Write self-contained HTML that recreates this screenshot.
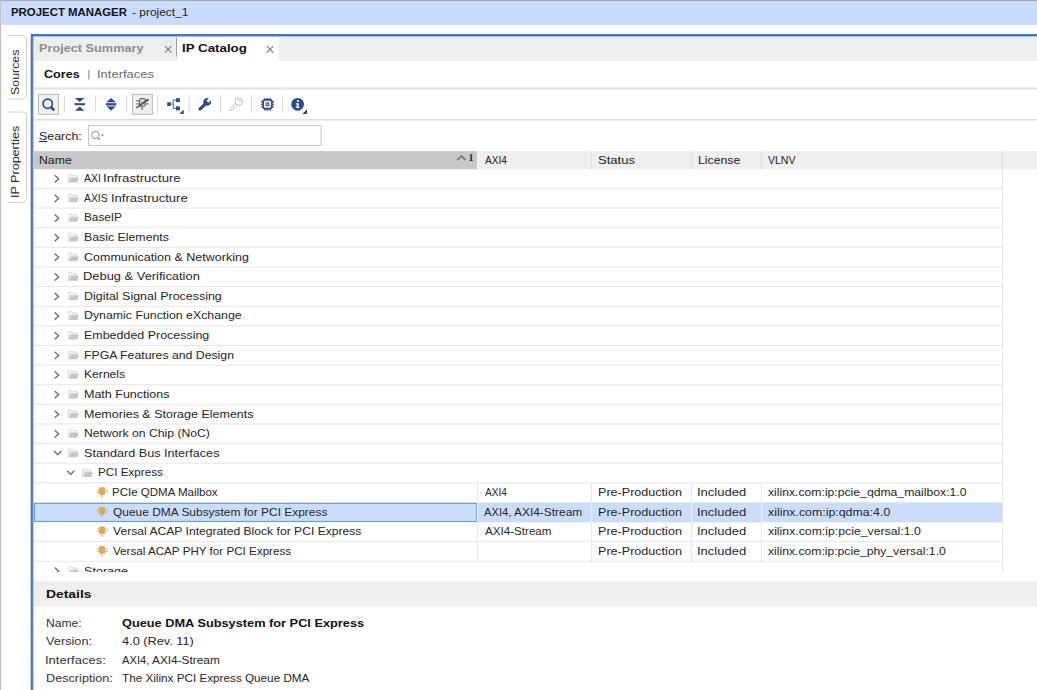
<!DOCTYPE html>
<html><head><meta charset="utf-8"><title>IP Catalog</title>
<style>
html,body{margin:0;padding:0;background:#fff;}
body{width:1037px;height:690px;position:relative;overflow:hidden;font-family:"Liberation Sans",sans-serif;font-size:11.5px;color:#1e1e1e;}
.a{position:absolute;}
.t{position:absolute;z-index:6;white-space:pre;line-height:14px;height:14px;transform-origin:0 0;}
.b{font-weight:bold;}
.sep{position:absolute;left:34px;width:968.5px;height:1px;background:#e7e7e7;}
.vs{position:absolute;top:95px;width:1px;height:18px;background:#dadada;}
svg.L{position:absolute;left:0;top:0;}
</style></head><body>
<svg class="L" style="z-index:0" width="1037" height="690" viewBox="0 0 1037 690"><rect x="0.00" y="0.00" width="1037.00" height="1.00" fill="#a8a8a8"/>
<rect x="0.00" y="0.00" width="1.20" height="690.00" fill="#c4c4c4"/>
<rect x="1.00" y="1.00" width="1036.00" height="23.90" fill="#c9dcfd"/>
<path d="M7,35.5 H23 Q26.5,35.5 26.5,39 V95.5 Q26.5,99 23,99 H7" fill="none" stroke="#d0d0d0" stroke-width="1"/>
<path d="M7,112 H23 Q26.5,112 26.5,115.5 V198.8 Q26.5,202.3 23,202.3 H7" fill="none" stroke="#d0d0d0" stroke-width="1"/>
<rect x="30.70" y="34.00" width="1007.00" height="656.00" fill="#4175cc"/>
<rect x="32.70" y="36.00" width="1005.00" height="654.00" fill="#86a8e2"/>
<rect x="33.60" y="36.70" width="1004.00" height="654.00" fill="#ffffff"/>
<rect x="34.00" y="37.00" width="1003.00" height="23.90" fill="#eeeeee"/>
<rect x="177.00" y="37.00" width="102.00" height="24.00" fill="#ffffff"/>
<rect x="176.00" y="37.00" width="1.00" height="19.50" fill="#a0a0a0"/>
<g transform="translate(164.60,45.80)"><path d="M0.4,0.4 L6.8,6.8 M6.8,0.4 L0.4,6.8" stroke="#777" stroke-width="1.05" fill="none"/></g>
<g transform="translate(266.50,45.80)"><path d="M0.4,0.4 L6.8,6.8 M6.8,0.4 L0.4,6.8" stroke="#777" stroke-width="1.05" fill="none"/></g>
<rect x="88.40" y="69.90" width="1.00" height="9.60" fill="#7c7c7c"/>
<rect x="34.00" y="87.30" width="1003.00" height="2.40" fill="#e4e4e4"/>
<rect x="34.00" y="119.00" width="1003.00" height="1.60" fill="#dedede"/>
<rect x="38.5" y="94.4" width="19.9" height="19.9" fill="#f1f1f1" stroke="#bababa" stroke-width="1"/>
<rect x="132.5" y="94.4" width="19.9" height="19.9" fill="#efefef" stroke="#bababa" stroke-width="1"/>
<rect x="63.90" y="95.30" width="1.00" height="17.40" fill="#dadada"/>
<rect x="94.90" y="95.30" width="1.00" height="17.40" fill="#dadada"/>
<rect x="126.10" y="95.30" width="1.00" height="17.40" fill="#dadada"/>
<rect x="157.10" y="95.30" width="1.00" height="17.40" fill="#dadada"/>
<rect x="188.70" y="95.30" width="1.00" height="17.40" fill="#dadada"/>
<rect x="220.00" y="95.30" width="1.00" height="17.40" fill="#dadada"/>
<rect x="250.90" y="95.30" width="1.00" height="17.40" fill="#dadada"/>
<rect x="282.20" y="95.30" width="1.00" height="17.40" fill="#dadada"/>
<g transform="translate(40.00,96.00)"><circle cx="7.7" cy="7.7" r="4.6" fill="none" stroke="#2b4c8c" stroke-width="1.7"/><line x1="11.5" y1="11.5" x2="13.4" y2="13.4" stroke="#2b4c8c" stroke-width="2.8" stroke-linecap="round"/></g>
<g transform="translate(74.00,97.30)"><g fill="#2b4c8c"><polygon points="0.8,0.7 10.6,0.7 5.7,4.7"/><rect x="0.5" y="5.9" width="10.5" height="2.0"/><polygon points="1.0,13.5 10.4,13.5 5.7,9.3"/></g></g>
<g transform="translate(105.00,97.30)"><rect x="1.4" y="4.6" width="9.6" height="4.7" fill="#c3cde3"/><g fill="#2b4c8c"><polygon points="6.1,0.6 10.6,4.7 1.6,4.7"/><rect x="1.0" y="5.9" width="10.2" height="2.1"/><polygon points="1.6,9.2 10.6,9.2 6.1,13.5"/></g></g>
<g transform="translate(135.00,97.00)"><g stroke="#6a6a6a" stroke-width="1.0" fill="none"><line x1="1" y1="3.9" x2="13.7" y2="3.9"/><line x1="1" y1="6.9" x2="13.7" y2="6.9"/><line x1="7.1" y1="9.5" x2="7.1" y2="12.9" stroke-width="1.2"/></g><rect x="4.6" y="1.6" width="5.6" height="7.6" rx="0.8" fill="#cfcfcf" stroke="#4a4a4a" stroke-width="0.9"/><line x1="1.3" y1="11.0" x2="13.4" y2="2.1" stroke="#444" stroke-width="1.5"/></g>
<g transform="translate(166.00,97.30)"><g fill="#2b4c8c"><rect x="1.2" y="4.9" width="3.6" height="3.8"/><rect x="9.9" y="0.9" width="4" height="3.9"/><rect x="9.9" y="9.1" width="4" height="4"/></g><path d="M4.8,6.8 H7.3 M9.9,2.8 H7.3 V11.1 H9.9" fill="none" stroke="#5d7dbb" stroke-width="1.1"/><polygon points="17.7,12.4 17.7,16.4 13.3,16.4" fill="#3a3a3a"/></g>
<g transform="translate(197.30,96.80)"><g transform="scale(0.94)"><path d="M14.3,3.9 L11.9,6.3 L9.7,4.1 L12.1,1.7 C10.6,1.1 8.8,1.4 7.6,2.6 C6.4,3.8 6.1,5.5 6.6,7.0 L1.7,11.9 C1.0,12.6 1.0,13.6 1.7,14.3 C2.4,15.0 3.4,15.0 4.1,14.3 L9.0,9.4 C10.5,9.9 12.2,9.6 13.4,8.4 C14.6,7.2 14.9,5.4 14.3,3.9 Z" fill="#2b4c8c"/></g></g>
<g transform="translate(229.00,97.00)"><line x1="2.2" y1="12.4" x2="8" y2="6.6" stroke="#c2c2c2" stroke-width="3.4" stroke-linecap="round"/><line x1="2.2" y1="12.4" x2="8" y2="6.6" stroke="#fff" stroke-width="1.5" stroke-linecap="round"/><circle cx="9.9" cy="4.7" r="3.7" fill="#fff" stroke="#c2c2c2" stroke-width="1"/><circle cx="10.9" cy="3.7" r="0.9" fill="none" stroke="#c8c8c8" stroke-width="0.8"/></g>
<g transform="translate(260.90,97.70)"><g transform="scale(0.88)"><g stroke="#2b4c8c" stroke-width="1.5"><path d="M4.6,0.3 V14.7 M7.5,0.3 V14.7 M10.4,0.3 V14.7 M0.3,4.6 H14.7 M0.3,7.5 H14.7 M0.3,10.4 H14.7" fill="none"/></g><rect x="2.6" y="2.6" width="9.8" height="9.8" rx="1.8" fill="#fff" stroke="#2b4c8c" stroke-width="2"/><rect x="6" y="6" width="3" height="3" fill="#dfe6f3" stroke="#2b4c8c" stroke-width="1.2"/></g></g>
<g transform="translate(291.00,97.70)"><circle cx="6.6" cy="6.6" r="6.4" fill="#2b4c8c"/><g fill="#fff"><circle cx="6.9" cy="3.4" r="1.1"/><path d="M5.0,5.5 H7.7 V9.4 H8.6 V10.4 H4.8 V9.4 H5.7 V6.5 H5.0 Z"/></g><polygon points="16,11.6 16,16.2 11.4,16.2" fill="#3a3a3a"/></g>
<rect x="88.5" y="125.6" width="232.6" height="19.8" fill="#fff" stroke="#c6c6c6" stroke-width="1"/>
<g transform="translate(90.00,130.00)"><circle cx="5.4" cy="5.0" r="3.6" fill="none" stroke="#a2a2a2" stroke-width="1.1"/><line x1="8" y1="7.7" x2="10.2" y2="9.7" stroke="#9a9a9a" stroke-width="1.4"/><polygon points="10.9,4.6 14.1,4.6 12.5,6.5" fill="#8c8c8c"/></g>
<rect x="34.00" y="151.10" width="443.30" height="18.20" fill="#c8c8c8"/>
<rect x="477.30" y="151.10" width="559.70" height="18.20" fill="#efefef"/>
<rect x="477.20" y="151.10" width="0.90" height="18.20" fill="#f7f7f7"/>
<rect x="590.90" y="151.00" width="1.00" height="18.20" fill="#e0e0e0"/>
<rect x="691.00" y="151.00" width="1.00" height="18.20" fill="#e0e0e0"/>
<rect x="760.80" y="151.00" width="1.00" height="18.20" fill="#e0e0e0"/>
<g transform="translate(456.50,154.00)"><polyline points="0.8,6.0 4.9,2.0 9.0,6.0" fill="none" stroke="#808080" stroke-width="1.9"/></g>
<rect x="34.00" y="187.96" width="968.50" height="1.00" fill="#e6e6e6"/>
<rect x="34.00" y="207.58" width="968.50" height="1.00" fill="#e6e6e6"/>
<rect x="34.00" y="227.21" width="968.50" height="1.00" fill="#e6e6e6"/>
<rect x="34.00" y="246.83" width="968.50" height="1.00" fill="#e6e6e6"/>
<rect x="34.00" y="266.45" width="968.50" height="1.00" fill="#e6e6e6"/>
<rect x="34.00" y="286.08" width="968.50" height="1.00" fill="#e6e6e6"/>
<rect x="34.00" y="305.70" width="968.50" height="1.00" fill="#e6e6e6"/>
<rect x="34.00" y="325.32" width="968.50" height="1.00" fill="#e6e6e6"/>
<rect x="34.00" y="344.94" width="968.50" height="1.00" fill="#e6e6e6"/>
<rect x="34.00" y="364.57" width="968.50" height="1.00" fill="#e6e6e6"/>
<rect x="34.00" y="384.19" width="968.50" height="1.00" fill="#e6e6e6"/>
<rect x="34.00" y="403.81" width="968.50" height="1.00" fill="#e6e6e6"/>
<rect x="34.00" y="423.44" width="968.50" height="1.00" fill="#e6e6e6"/>
<rect x="34.00" y="443.06" width="968.50" height="1.00" fill="#e6e6e6"/>
<rect x="34.00" y="462.68" width="968.50" height="1.00" fill="#e6e6e6"/>
<rect x="34.00" y="482.31" width="968.50" height="1.00" fill="#e6e6e6"/>
<rect x="34.00" y="501.93" width="968.50" height="1.00" fill="#e6e6e6"/>
<rect x="34.00" y="521.55" width="968.50" height="1.00" fill="#e6e6e6"/>
<rect x="34.00" y="541.17" width="968.50" height="1.00" fill="#e6e6e6"/>
<rect x="34.00" y="560.80" width="968.50" height="1.00" fill="#e6e6e6"/>
<rect x="34.00" y="503.05" width="968.10" height="18.95" fill="#cadefc"/>
<rect x="34.5" y="503.4" width="441.9" height="18.0" fill="none" stroke="#5a9dd8" stroke-width="1"/>
<rect x="476.80" y="483.10" width="1.00" height="78.40" fill="#e6e6e6"/>
<rect x="590.90" y="483.10" width="1.00" height="78.40" fill="#e6e6e6"/>
<rect x="691.00" y="483.10" width="1.00" height="78.40" fill="#e6e6e6"/>
<rect x="760.80" y="483.10" width="1.00" height="78.40" fill="#e6e6e6"/>
<rect x="477.20" y="503.05" width="0.90" height="18.95" fill="#eef3fb"/>
<rect x="591.30" y="503.05" width="0.90" height="18.95" fill="#eef3fb"/>
<rect x="691.40" y="503.05" width="0.90" height="18.95" fill="#eef3fb"/>
<rect x="761.20" y="503.05" width="0.90" height="18.95" fill="#eef3fb"/>
<rect x="1002.10" y="151.10" width="0.90" height="18.20" fill="#d9d9d9"/>
<rect x="1002.10" y="169.30" width="0.90" height="402.70" fill="#e5e5e5"/>
<g transform="translate(54.00,173.80)"><polyline points="0.7,1.4 4.6,5 0.7,8.6" fill="none" stroke="#6a6a6a" stroke-width="1.35"/></g>
<g transform="translate(68.00,174.00)"><path d="M0.4,8.3 V1.0 Q0.4,0.4 1.0,0.4 H3.8 L4.8,1.5 H8.6 Q9.2,1.5 9.2,2.1 V3.6 H2.6 L0.9,8.3 Z" fill="#f3f3f3" stroke="#d6d6d6" stroke-width="0.85"/><path d="M2.9,3.9 H10.7 L9.3,8.6 H1.2 Z" fill="#c6c6c6"/></g>
<g transform="translate(54.00,193.42)"><polyline points="0.7,1.4 4.6,5 0.7,8.6" fill="none" stroke="#6a6a6a" stroke-width="1.35"/></g>
<g transform="translate(68.00,193.62)"><path d="M0.4,8.3 V1.0 Q0.4,0.4 1.0,0.4 H3.8 L4.8,1.5 H8.6 Q9.2,1.5 9.2,2.1 V3.6 H2.6 L0.9,8.3 Z" fill="#f3f3f3" stroke="#d6d6d6" stroke-width="0.85"/><path d="M2.9,3.9 H10.7 L9.3,8.6 H1.2 Z" fill="#c6c6c6"/></g>
<g transform="translate(54.00,213.04)"><polyline points="0.7,1.4 4.6,5 0.7,8.6" fill="none" stroke="#6a6a6a" stroke-width="1.35"/></g>
<g transform="translate(68.00,213.24)"><path d="M0.4,8.3 V1.0 Q0.4,0.4 1.0,0.4 H3.8 L4.8,1.5 H8.6 Q9.2,1.5 9.2,2.1 V3.6 H2.6 L0.9,8.3 Z" fill="#f3f3f3" stroke="#d6d6d6" stroke-width="0.85"/><path d="M2.9,3.9 H10.7 L9.3,8.6 H1.2 Z" fill="#c6c6c6"/></g>
<g transform="translate(54.00,232.66)"><polyline points="0.7,1.4 4.6,5 0.7,8.6" fill="none" stroke="#6a6a6a" stroke-width="1.35"/></g>
<g transform="translate(68.00,232.86)"><path d="M0.4,8.3 V1.0 Q0.4,0.4 1.0,0.4 H3.8 L4.8,1.5 H8.6 Q9.2,1.5 9.2,2.1 V3.6 H2.6 L0.9,8.3 Z" fill="#f3f3f3" stroke="#d6d6d6" stroke-width="0.85"/><path d="M2.9,3.9 H10.7 L9.3,8.6 H1.2 Z" fill="#c6c6c6"/></g>
<g transform="translate(54.00,252.28)"><polyline points="0.7,1.4 4.6,5 0.7,8.6" fill="none" stroke="#6a6a6a" stroke-width="1.35"/></g>
<g transform="translate(68.00,252.48)"><path d="M0.4,8.3 V1.0 Q0.4,0.4 1.0,0.4 H3.8 L4.8,1.5 H8.6 Q9.2,1.5 9.2,2.1 V3.6 H2.6 L0.9,8.3 Z" fill="#f3f3f3" stroke="#d6d6d6" stroke-width="0.85"/><path d="M2.9,3.9 H10.7 L9.3,8.6 H1.2 Z" fill="#c6c6c6"/></g>
<g transform="translate(54.00,271.90)"><polyline points="0.7,1.4 4.6,5 0.7,8.6" fill="none" stroke="#6a6a6a" stroke-width="1.35"/></g>
<g transform="translate(68.00,272.10)"><path d="M0.4,8.3 V1.0 Q0.4,0.4 1.0,0.4 H3.8 L4.8,1.5 H8.6 Q9.2,1.5 9.2,2.1 V3.6 H2.6 L0.9,8.3 Z" fill="#f3f3f3" stroke="#d6d6d6" stroke-width="0.85"/><path d="M2.9,3.9 H10.7 L9.3,8.6 H1.2 Z" fill="#c6c6c6"/></g>
<g transform="translate(54.00,291.52)"><polyline points="0.7,1.4 4.6,5 0.7,8.6" fill="none" stroke="#6a6a6a" stroke-width="1.35"/></g>
<g transform="translate(68.00,291.72)"><path d="M0.4,8.3 V1.0 Q0.4,0.4 1.0,0.4 H3.8 L4.8,1.5 H8.6 Q9.2,1.5 9.2,2.1 V3.6 H2.6 L0.9,8.3 Z" fill="#f3f3f3" stroke="#d6d6d6" stroke-width="0.85"/><path d="M2.9,3.9 H10.7 L9.3,8.6 H1.2 Z" fill="#c6c6c6"/></g>
<g transform="translate(54.00,311.14)"><polyline points="0.7,1.4 4.6,5 0.7,8.6" fill="none" stroke="#6a6a6a" stroke-width="1.35"/></g>
<g transform="translate(68.00,311.34)"><path d="M0.4,8.3 V1.0 Q0.4,0.4 1.0,0.4 H3.8 L4.8,1.5 H8.6 Q9.2,1.5 9.2,2.1 V3.6 H2.6 L0.9,8.3 Z" fill="#f3f3f3" stroke="#d6d6d6" stroke-width="0.85"/><path d="M2.9,3.9 H10.7 L9.3,8.6 H1.2 Z" fill="#c6c6c6"/></g>
<g transform="translate(54.00,330.76)"><polyline points="0.7,1.4 4.6,5 0.7,8.6" fill="none" stroke="#6a6a6a" stroke-width="1.35"/></g>
<g transform="translate(68.00,330.96)"><path d="M0.4,8.3 V1.0 Q0.4,0.4 1.0,0.4 H3.8 L4.8,1.5 H8.6 Q9.2,1.5 9.2,2.1 V3.6 H2.6 L0.9,8.3 Z" fill="#f3f3f3" stroke="#d6d6d6" stroke-width="0.85"/><path d="M2.9,3.9 H10.7 L9.3,8.6 H1.2 Z" fill="#c6c6c6"/></g>
<g transform="translate(54.00,350.38)"><polyline points="0.7,1.4 4.6,5 0.7,8.6" fill="none" stroke="#6a6a6a" stroke-width="1.35"/></g>
<g transform="translate(68.00,350.58)"><path d="M0.4,8.3 V1.0 Q0.4,0.4 1.0,0.4 H3.8 L4.8,1.5 H8.6 Q9.2,1.5 9.2,2.1 V3.6 H2.6 L0.9,8.3 Z" fill="#f3f3f3" stroke="#d6d6d6" stroke-width="0.85"/><path d="M2.9,3.9 H10.7 L9.3,8.6 H1.2 Z" fill="#c6c6c6"/></g>
<g transform="translate(54.00,370.00)"><polyline points="0.7,1.4 4.6,5 0.7,8.6" fill="none" stroke="#6a6a6a" stroke-width="1.35"/></g>
<g transform="translate(68.00,370.20)"><path d="M0.4,8.3 V1.0 Q0.4,0.4 1.0,0.4 H3.8 L4.8,1.5 H8.6 Q9.2,1.5 9.2,2.1 V3.6 H2.6 L0.9,8.3 Z" fill="#f3f3f3" stroke="#d6d6d6" stroke-width="0.85"/><path d="M2.9,3.9 H10.7 L9.3,8.6 H1.2 Z" fill="#c6c6c6"/></g>
<g transform="translate(54.00,389.62)"><polyline points="0.7,1.4 4.6,5 0.7,8.6" fill="none" stroke="#6a6a6a" stroke-width="1.35"/></g>
<g transform="translate(68.00,389.82)"><path d="M0.4,8.3 V1.0 Q0.4,0.4 1.0,0.4 H3.8 L4.8,1.5 H8.6 Q9.2,1.5 9.2,2.1 V3.6 H2.6 L0.9,8.3 Z" fill="#f3f3f3" stroke="#d6d6d6" stroke-width="0.85"/><path d="M2.9,3.9 H10.7 L9.3,8.6 H1.2 Z" fill="#c6c6c6"/></g>
<g transform="translate(54.00,409.24)"><polyline points="0.7,1.4 4.6,5 0.7,8.6" fill="none" stroke="#6a6a6a" stroke-width="1.35"/></g>
<g transform="translate(68.00,409.44)"><path d="M0.4,8.3 V1.0 Q0.4,0.4 1.0,0.4 H3.8 L4.8,1.5 H8.6 Q9.2,1.5 9.2,2.1 V3.6 H2.6 L0.9,8.3 Z" fill="#f3f3f3" stroke="#d6d6d6" stroke-width="0.85"/><path d="M2.9,3.9 H10.7 L9.3,8.6 H1.2 Z" fill="#c6c6c6"/></g>
<g transform="translate(54.00,428.86)"><polyline points="0.7,1.4 4.6,5 0.7,8.6" fill="none" stroke="#6a6a6a" stroke-width="1.35"/></g>
<g transform="translate(68.00,429.06)"><path d="M0.4,8.3 V1.0 Q0.4,0.4 1.0,0.4 H3.8 L4.8,1.5 H8.6 Q9.2,1.5 9.2,2.1 V3.6 H2.6 L0.9,8.3 Z" fill="#f3f3f3" stroke="#d6d6d6" stroke-width="0.85"/><path d="M2.9,3.9 H10.7 L9.3,8.6 H1.2 Z" fill="#c6c6c6"/></g>
<g transform="translate(53.40,449.48)"><polyline points="0.7,1.6 4.3,5.3 7.9,1.6" fill="none" stroke="#6a6a6a" stroke-width="1.35"/></g>
<g transform="translate(68.00,448.68)"><path d="M0.4,8.3 V1.0 Q0.4,0.4 1.0,0.4 H3.8 L4.8,1.5 H8.6 Q9.2,1.5 9.2,2.1 V3.6 H2.6 L0.9,8.3 Z" fill="#f3f3f3" stroke="#d6d6d6" stroke-width="0.85"/><path d="M2.9,3.9 H10.7 L9.3,8.6 H1.2 Z" fill="#c6c6c6"/></g>
<g transform="translate(66.40,469.10)"><polyline points="0.7,1.6 4.3,5.3 7.9,1.6" fill="none" stroke="#6a6a6a" stroke-width="1.35"/></g>
<g transform="translate(82.20,468.30)"><path d="M0.4,8.3 V1.0 Q0.4,0.4 1.0,0.4 H3.8 L4.8,1.5 H8.6 Q9.2,1.5 9.2,2.1 V3.6 H2.6 L0.9,8.3 Z" fill="#f3f3f3" stroke="#d6d6d6" stroke-width="0.85"/><path d="M2.9,3.9 H10.7 L9.3,8.6 H1.2 Z" fill="#c6c6c6"/></g>
<g transform="translate(96.70,486.82)"><g stroke="#bcbcbc" stroke-width="0.8"><line x1="0" y1="2.8" x2="11.3" y2="2.8"/><line x1="0" y1="4.3" x2="11.3" y2="4.3"/><line x1="0" y1="5.8" x2="11.3" y2="5.8"/></g><line x1="5.35" y1="7.6" x2="5.35" y2="10.9" stroke="#a2a2a2" stroke-width="1.1"/><rect x="2.9" y="0.9" width="4.9" height="6.7" fill="#f7a823" stroke="#b8ab92" stroke-width="0.8"/></g>
<g transform="translate(96.70,506.44)"><g stroke="#bcbcbc" stroke-width="0.8"><line x1="0" y1="2.8" x2="11.3" y2="2.8"/><line x1="0" y1="4.3" x2="11.3" y2="4.3"/><line x1="0" y1="5.8" x2="11.3" y2="5.8"/></g><line x1="5.35" y1="7.6" x2="5.35" y2="10.9" stroke="#a2a2a2" stroke-width="1.1"/><rect x="2.9" y="0.9" width="4.9" height="6.7" fill="#f7a823" stroke="#b8ab92" stroke-width="0.8"/></g>
<g transform="translate(96.70,526.06)"><g stroke="#bcbcbc" stroke-width="0.8"><line x1="0" y1="2.8" x2="11.3" y2="2.8"/><line x1="0" y1="4.3" x2="11.3" y2="4.3"/><line x1="0" y1="5.8" x2="11.3" y2="5.8"/></g><line x1="5.35" y1="7.6" x2="5.35" y2="10.9" stroke="#a2a2a2" stroke-width="1.1"/><rect x="2.9" y="0.9" width="4.9" height="6.7" fill="#f7a823" stroke="#b8ab92" stroke-width="0.8"/></g>
<g transform="translate(96.70,545.68)"><g stroke="#bcbcbc" stroke-width="0.8"><line x1="0" y1="2.8" x2="11.3" y2="2.8"/><line x1="0" y1="4.3" x2="11.3" y2="4.3"/><line x1="0" y1="5.8" x2="11.3" y2="5.8"/></g><line x1="5.35" y1="7.6" x2="5.35" y2="10.9" stroke="#a2a2a2" stroke-width="1.1"/><rect x="2.9" y="0.9" width="4.9" height="6.7" fill="#f7a823" stroke="#b8ab92" stroke-width="0.8"/></g>
<g transform="translate(54.00,566.20)"><polyline points="0.7,1.4 4.6,5 0.7,8.6" fill="none" stroke="#6a6a6a" stroke-width="1.35"/></g>
<g transform="translate(68.00,566.40)"><path d="M0.4,8.3 V1.0 Q0.4,0.4 1.0,0.4 H3.8 L4.8,1.5 H8.6 Q9.2,1.5 9.2,2.1 V3.6 H2.6 L0.9,8.3 Z" fill="#f3f3f3" stroke="#d6d6d6" stroke-width="0.85"/><path d="M2.9,3.9 H10.7 L9.3,8.6 H1.2 Z" fill="#c6c6c6"/></g></svg>
<span class="a" style="left:468.4px;top:151.8px;font:bold 10px/11px 'Liberation Serif',serif;color:#222;z-index:6;">1</span>
<svg class="L" style="z-index:5" width="1037" height="690" viewBox="0 0 1037 690"><rect x="34.00" y="572.00" width="1003.00" height="9.00" fill="#ffffff"/>
<rect x="34.00" y="581.00" width="1003.00" height="25.60" fill="#efefef"/></svg>
<span class="t b" id="t0" style="left:11.00px;top:5.32px;color:#111;transform:scaleX(0.9914);">PROJECT MANAGER</span>
<span class="t" id="t1" style="left:132.00px;top:5.32px;color:#222;transform:scaleX(1.0375);">- project_1</span>
<span class="t b" id="t2" style="left:39.00px;top:40.72px;color:#8c8c8c;transform:scaleX(1.1053);">Project Summary</span>
<span class="t b" id="t3" style="left:182.00px;top:40.72px;color:#111;transform:scaleX(1.1581);">IP Catalog</span>
<span class="t b" id="t4" style="left:44.00px;top:67.32px;color:#111;transform:scaleX(1.0953);">Cores</span>
<span class="t" id="t5" style="left:97.00px;top:67.32px;color:#6a6a6a;transform:scaleX(1.1281);">Interfaces</span>
<span class="t" id="t6" style="left:39.00px;top:129.22px;color:#222;transform:scaleX(1.0780);"><u>S</u>earch:</span>
<span class="t" id="t7" style="left:39.00px;top:153.22px;color:#222;transform:scaleX(1.0671);">Name</span>
<span class="t" id="t8" style="left:485.00px;top:153.22px;color:#222;transform:scaleX(0.8780);">AXI4</span>
<span class="t" id="t9" style="left:598.00px;top:153.22px;color:#222;transform:scaleX(1.1338);">Status</span>
<span class="t" id="t10" style="left:698.00px;top:153.22px;color:#222;transform:scaleX(1.0657);">License</span>
<span class="t" id="t11" style="left:768.00px;top:153.22px;color:#222;transform:scaleX(0.9134);">VLNV</span>
<span class="t" id="t12" style="left:84.00px;top:171.12px;color:#262626;transform:scaleX(0.9093);">AXI</span>
<span class="t" id="t13" style="left:103.00px;top:171.12px;color:#262626;transform:scaleX(1.1467);">Infrastructure</span>
<span class="t" id="t14" style="left:84.00px;top:190.74px;color:#262626;transform:scaleX(0.9030);">AXIS</span>
<span class="t" id="t15" style="left:111.00px;top:190.74px;color:#262626;transform:scaleX(1.1318);">Infrastructure</span>
<span class="t" id="t16" style="left:84.00px;top:210.36px;color:#262626;transform:scaleX(1.0227);">BaseIP</span>
<span class="t" id="t17" style="left:84.00px;top:229.98px;color:#262626;transform:scaleX(1.0717);">Basic Elements</span>
<span class="t" id="t18" style="left:84.00px;top:249.60px;color:#262626;transform:scaleX(1.0886);">Communication &amp; Networking</span>
<span class="t" id="t19" style="left:83.00px;top:269.22px;color:#262626;transform:scaleX(1.1212);">Debug &amp; Verification</span>
<span class="t" id="t20" style="left:84.00px;top:288.84px;color:#262626;transform:scaleX(1.0833);">Digital Signal Processing</span>
<span class="t" id="t21" style="left:84.00px;top:308.46px;color:#262626;transform:scaleX(1.0722);">Dynamic Function eXchange</span>
<span class="t" id="t22" style="left:84.00px;top:328.08px;color:#262626;transform:scaleX(1.0828);">Embedded Processing</span>
<span class="t" id="t23" style="left:84.00px;top:347.70px;color:#262626;transform:scaleX(1.0665);">FPGA Features and Design</span>
<span class="t" id="t24" style="left:84.00px;top:367.32px;color:#262626;transform:scaleX(1.0548);">Kernels</span>
<span class="t" id="t25" style="left:84.00px;top:386.94px;color:#262626;transform:scaleX(1.0868);">Math Functions</span>
<span class="t" id="t26" style="left:84.00px;top:406.56px;color:#262626;transform:scaleX(1.0872);">Memories &amp; Storage Elements</span>
<span class="t" id="t27" style="left:84.00px;top:426.18px;color:#262626;transform:scaleX(1.0587);">Network on Chip (NoC)</span>
<span class="t" id="t28" style="left:84.00px;top:445.80px;color:#262626;transform:scaleX(1.0978);">Standard Bus Interfaces</span>
<span class="t" id="t29" style="left:98.00px;top:465.42px;color:#262626;transform:scaleX(1.0141);">PCI Express</span>
<span class="t" id="t30" style="left:112.00px;top:485.04px;color:#262626;transform:scaleX(1.0016);">PCIe QDMA Mailbox</span>
<span class="t" id="t31" style="left:113.00px;top:504.66px;color:#262626;transform:scaleX(1.0386);">Queue DMA Subsystem for PCI Express</span>
<span class="t" id="t32" style="left:113.00px;top:524.28px;color:#262626;transform:scaleX(1.0542);">Versal ACAP Integrated Block for PCI Express</span>
<span class="t" id="t33" style="left:113.00px;top:543.90px;color:#262626;transform:scaleX(1.0121);">Versal ACAP PHY for PCI Express</span>
<span class="t" id="t34" style="left:84.00px;top:563.52px;color:#262626;transform:scaleX(1.0938);z-index:1;">Storage</span>
<span class="t" id="t35" style="left:485.00px;top:485.04px;color:#262626;transform:scaleX(0.8780);">AXI4</span>
<span class="t" id="t36" style="left:598.00px;top:485.04px;color:#262626;transform:scaleX(1.0938);">Pre-Production</span>
<span class="t" id="t37" style="left:697.00px;top:485.04px;color:#262626;transform:scaleX(1.1300);">Included</span>
<span class="t" id="t38" style="left:768.00px;top:485.04px;color:#262626;transform:scaleX(1.0597);">xilinx.com:ip:pcie_qdma_mailbox:1.0</span>
<span class="t" id="t39" style="left:484.00px;top:504.66px;color:#262626;transform:scaleX(0.9739);">AXI4,</span>
<span class="t" id="t40" style="left:514.00px;top:504.66px;color:#262626;transform:scaleX(1.0358);">AXI4-Stream</span>
<span class="t" id="t41" style="left:598.00px;top:504.66px;color:#262626;transform:scaleX(1.0938);">Pre-Production</span>
<span class="t" id="t42" style="left:697.00px;top:504.66px;color:#262626;transform:scaleX(1.1300);">Included</span>
<span class="t" id="t43" style="left:768.00px;top:504.66px;color:#262626;transform:scaleX(1.0747);">xilinx.com:ip:qdma:4.0</span>
<span class="t" id="t44" style="left:485.00px;top:524.28px;color:#262626;transform:scaleX(1.0097);">AXI4-Stream</span>
<span class="t" id="t45" style="left:598.00px;top:524.28px;color:#262626;transform:scaleX(1.0938);">Pre-Production</span>
<span class="t" id="t46" style="left:697.00px;top:524.28px;color:#262626;transform:scaleX(1.1300);">Included</span>
<span class="t" id="t47" style="left:768.00px;top:524.28px;color:#262626;transform:scaleX(1.0671);">xilinx.com:ip:pcie_versal:1.0</span>
<span class="t" id="t48" style="left:598.00px;top:543.90px;color:#262626;transform:scaleX(1.0938);">Pre-Production</span>
<span class="t" id="t49" style="left:697.00px;top:543.90px;color:#262626;transform:scaleX(1.1300);">Included</span>
<span class="t" id="t50" style="left:768.00px;top:543.90px;color:#262626;transform:scaleX(1.0575);">xilinx.com:ip:pcie_phy_versal:1.0</span>
<span class="t b" id="t51" style="left:46.00px;top:587.01px;color:#111;transform:scaleX(1.1753);font-size:11.8px;">Details</span>
<span class="t" id="t52" style="left:46.00px;top:615.62px;color:#333;transform:scaleX(1.0541);">Name:</span>
<span class="t" id="t53" style="left:46.00px;top:634.32px;color:#333;transform:scaleX(1.1083);">Version:</span>
<span class="t" id="t54" style="left:45.00px;top:652.82px;color:#333;transform:scaleX(1.1338);">Interfaces:</span>
<span class="t" id="t55" style="left:46.00px;top:671.42px;color:#333;transform:scaleX(1.1011);">Description:</span>
<span class="t b" id="t56" style="left:122.00px;top:615.62px;color:#111;transform:scaleX(1.1099);">Queue DMA Subsystem for PCI Express</span>
<span class="t" id="t57" style="left:122.00px;top:634.32px;color:#262626;transform:scaleX(1.1082);">4.0 (Rev. 11)</span>
<span class="t" id="t58" style="left:122.00px;top:652.82px;color:#262626;transform:scaleX(0.9702);">AXI4,</span>
<span class="t" id="t59" style="left:152.00px;top:652.82px;color:#262626;transform:scaleX(1.0297);">AXI4-Stream</span>
<span class="t" id="t60" style="left:122.00px;top:671.42px;color:#262626;transform:scaleX(1.0182);">The Xilinx PCI Express Queue DMA</span>
<span class="t" id="t61" style="left:8.22px;top:95.26px;color:#2e2e2e;transform:rotate(-90deg) scaleX(1.0764);">Sources</span>
<span class="t" id="t62" style="left:8.22px;top:197.86px;color:#2e2e2e;transform:rotate(-90deg) scaleX(1.0912);">IP Properties</span>
</body></html>
